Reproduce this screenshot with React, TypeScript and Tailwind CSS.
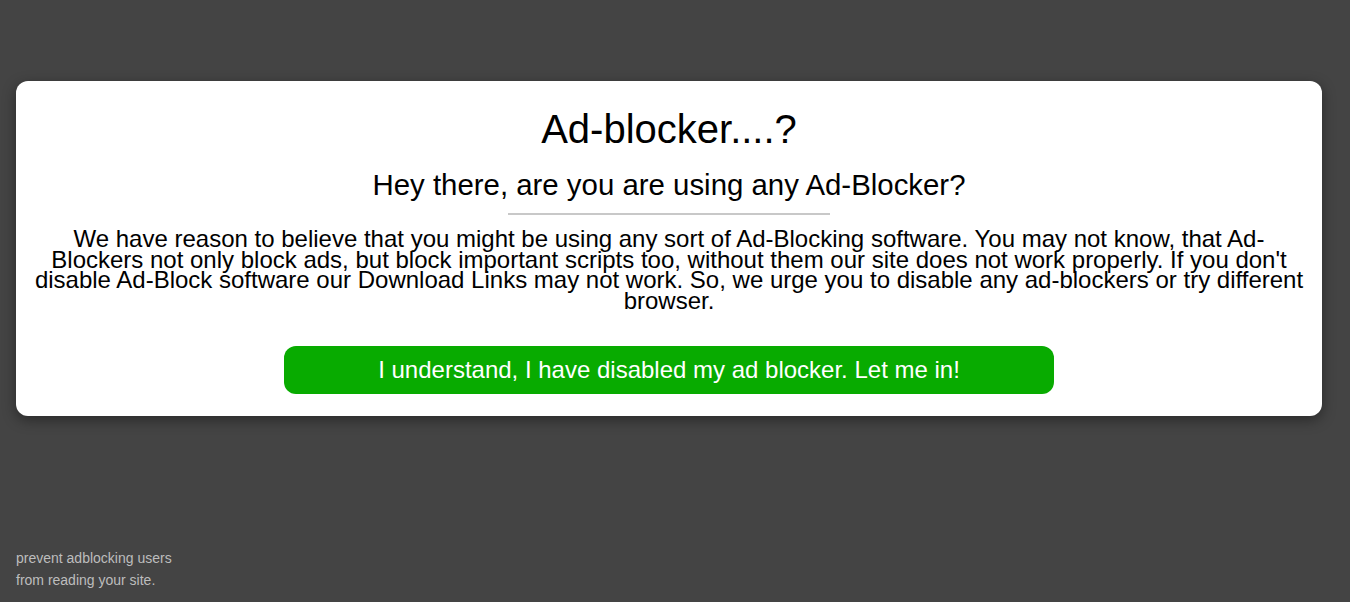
export default function App() {
  return (
    <div className="flex min-h-screen flex-col bg-[#444444] font-['Liberation_Sans',Arial,sans-serif]">
      <div className="ml-4 mr-[28px] mt-[81px] rounded-xl bg-white px-4 pb-[22px] pt-6 text-center text-black shadow-[0_4px_14px_rgba(0,0,0,0.4)]">
        <h1 className="text-[40px] leading-[48px]">Ad-blocker....?</h1>
        <h2 className="mt-[15px] text-[29.4px] leading-[34px]">Hey there, are you are using any Ad-Blocker?</h2>
        <div className="mx-auto mt-[11px] h-[2px] w-[322px] bg-[#c8c8c8]" />
        <p className="mt-[14px] text-[24px] leading-[20.5px]">
          We have reason to believe that you might be using any sort of Ad-Blocking software. You may not know, that Ad-Blockers not only block ads, but block important scripts too, without them our site does not work properly. If you don't disable Ad-Block software our Download Links may not work. So, we urge you to disable any ad-blockers or try different browser.
        </p>
        <button className="mx-auto mt-[35px] block h-12 w-[770px] rounded-xl bg-[#08ab00] text-[24px] text-white">
          I understand, I have disabled my ad blocker. Let me in!
        </button>
      </div>
      <div className="mt-auto px-4 pb-[11px] text-[14px] leading-[22px] text-[#bdbdbd]">
        <div>prevent adblocking users</div>
        <div>from reading your site.</div>
      </div>
    </div>
  );
}
